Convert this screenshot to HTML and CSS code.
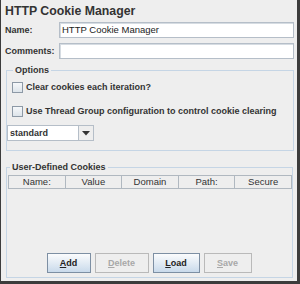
FILE: index.html
```html
<!DOCTYPE html>
<html>
<head>
<meta charset="utf-8">
<link rel="stylesheet" href="styles.css">
</head>
<body>
<div class="frame">
  <div class="win">
    <div class="title">HTTP Cookie Manager</div>
    <div class="row">
      <span class="lbl">Name:</span>
      <div class="field">HTTP Cookie Manager</div>
    </div>
    <div class="row">
      <span class="lbl">Comments:</span>
      <div class="field"></div>
    </div>
    <fieldset class="group options">
      <legend>Options</legend>
      <div class="check c1"><span class="box"></span><span>Clear cookies each iteration?</span></div>
      <div class="check c2"><span class="box"></span><span>Use Thread Group configuration to control cookie clearing</span></div>
      <div class="combo"><span class="combo-text">standard</span><span class="combo-btn"><svg width="8" height="5" viewBox="0 0 8 5"><path d="M0 0H8L4 4.5Z" fill="#333"/></svg></span></div>
    </fieldset>
    <fieldset class="group cookies">
      <legend>User-Defined Cookies</legend>
      <div class="thead">
        <div class="th">Name:</div>
        <div class="th">Value</div>
        <div class="th">Domain</div>
        <div class="th">Path:</div>
        <div class="th">Secure</div>
      </div>
      <div class="spacer"></div>
      <div class="buttons">
        <div class="btn on add"><u>A</u>dd</div>
        <div class="btn off del"><u>D</u>elete</div>
        <div class="btn on load"><u>L</u>oad</div>
        <div class="btn off save"><u>S</u>ave</div>
      </div>
    </fieldset>
  </div>
</div>
</body>
</html>
```
FILE: styles.css
```css
html, body { margin: 0; padding: 0; }
body { font-family: "Liberation Sans", Arial, sans-serif; }
.frame {
  width: 300px; height: 284px; box-sizing: border-box;
  background: #3c3c3c;
  padding: 0 3px 3px 1px;
}
.win {
  background: #eeeeee; height: 100%; box-sizing: border-box;
  padding: 3px 3px 0 4px;
  display: flex; flex-direction: column;
  color: #333333;
}
.title { font-size: 12.3px; font-weight: bold; line-height: 16px; height: 19px; letter-spacing: 0; }
.row { display: flex; align-items: center; height: 16px; margin-bottom: 5px; }
.lbl { font-size: 9px; font-weight: bold; width: 54px; flex: none; }
.field {
  flex: 1; height: 16px; box-sizing: border-box;
  background: #fff; border: 1px solid #b5bec8; box-shadow: inset 1px 1px 0 #d6dce2;
  font-size: 9.5px; line-height: 14px; padding-left: 2px; color: #222;
}
.group {
  margin: 0 0 0 1px; border: 1px solid #c5d5e5; padding: 0 0 0 4px;
  min-width: 0;
}
.group legend {
  font-size: 9px; font-weight: bold; padding: 0 2px; margin-left: 2px; line-height: 10px;
  color: #333;
}
.options { height: 86px; box-sizing: border-box; margin-top: 1px; }
.check { display: flex; align-items: center; height: 12px; font-size: 9px; font-weight: bold; }
.c1 { margin-top: 6px; margin-bottom: 12px; }
.c2 { margin-bottom: 8px; }
.box {
  width: 9px; height: 9px; border: 1px solid #8d99a6; background: linear-gradient(#f6f8fa, #dde4ea);
  margin-left: 1px; margin-right: 3px; flex: none; box-sizing: content-box;
}
.combo {
  display: flex; width: 87px; height: 16px; box-sizing: border-box; margin-left: -4px;
  border: 1px solid #b5bec8; background: #fff;
}
.combo-text { flex: 1; font-size: 9px; font-weight: bold; line-height: 14px; padding-left: 2px; }
.combo-btn {
  width: 14px; border-left: 1px solid #b5bec8; background: #eeeeee;
  display: flex; align-items: center; justify-content: center;
}
.cookies { flex: 1; margin-top: 11px; margin-bottom: 3px; margin-right: 1px; display: flex; flex-direction: column; padding: 0 0 0 1px; }
.thead { display: flex; margin-top: 3px; margin-right: 1px; }
.th {
  flex: 1; height: 14px; box-sizing: border-box; border: 1px solid #b0b8c0; margin-right: -1px;
  background: #eeeeee; font-size: 9.5px; line-height: 12px; text-align: center; color: #333;
}
.spacer { flex: 1; }
.buttons { display: flex; justify-content: center; gap: 4px; margin-bottom: 4px; margin-left: -2px; }
.btn {
  height: 20px; box-sizing: border-box; font-size: 9px; font-weight: bold; line-height: 18px; text-align: center;
}
.btn.on { border: 1px solid #7d8fa3; background: linear-gradient(#fbfcfd, #c9daeb); color: #222; }
.btn.off { border: 1px solid #b9b9b9; background: #eeeeee; color: #a8a8a8; }
.add { width: 44px; }
.del { width: 54px; }
.load { width: 47px; }
.save { width: 48px; }
```
